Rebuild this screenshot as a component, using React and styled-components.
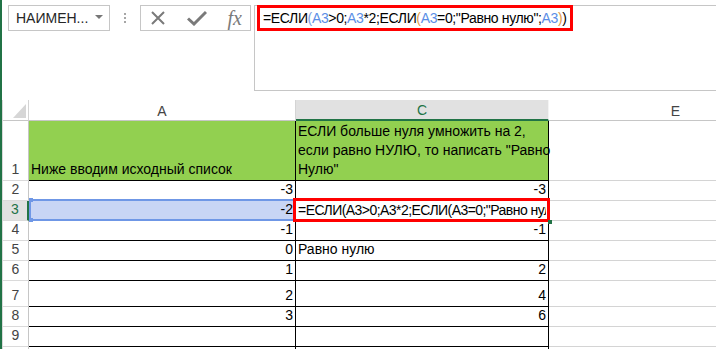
import React from 'react';
import styled, { createGlobalStyle } from 'styled-components';

const Global = createGlobalStyle`
  html, body { margin: 0; padding: 0; background: #fff; }
  body { font-family: "Liberation Sans", Arial, sans-serif; overflow: hidden; }
  * { box-sizing: border-box; }
`;

const Window = styled.div`
  width: 716px;
  height: 349px;
  overflow: hidden;
  border-left: 2px solid #217346;
  display: flex;
  flex-direction: column;
  background: #fff;
`;

const TopBar = styled.div`
  height: 100px;
  flex: none;
  display: flex;
  align-items: flex-start;
  padding: 5px 0 0 6px;
`;

const NameBox = styled.div`
  width: 102px;
  height: 26px;
  border: 1px solid #c6c6c6;
  display: flex;
  align-items: center;
  justify-content: space-between;
  padding: 0 6px 0 7px;
  font-size: 14px;
  color: #262626;
`;

const DropArrow = styled.span`
  width: 0;
  height: 0;
  border-left: 4px solid transparent;
  border-right: 4px solid transparent;
  border-top: 4px solid #777;
  margin-bottom: 2px;
`;

const Dots = styled.div`
  width: 30px;
  height: 26px;
  display: flex;
  flex-direction: column;
  align-items: center;
  justify-content: center;
  gap: 2px;
  & > i {
    width: 2px;
    height: 2px;
    background: #a6a6a6;
  }
`;

const FxBox = styled.div`
  width: 111px;
  height: 26px;
  border: 1px solid #c6c6c6;
  display: flex;
  align-items: center;
  justify-content: space-between;
  padding: 0 8px 0 9px;
`;

const FxLabel = styled.span`
  font-family: "Liberation Serif", "Times New Roman", serif;
  font-style: italic;
  font-size: 20px;
  color: #7a7a7a;
  line-height: 1;
  margin-top: -1px;
`;

const FormulaBar = styled.div`
  flex: 1;
  height: 86px;
  margin-left: 3px;
  border: 1px solid #c6c6c6;
  border-right: none;
`;

const FormulaText = styled.div`
  display: inline-flex;
  align-items: center;
  height: 26px;
  margin: -1px 0 0 2px;
  padding: 0 3px 0 3px;
  border: 3px solid #ff0000;
  font-size: 14px;
  letter-spacing: -0.36px;
  color: #000;
  white-space: nowrap;
`;

const Tok = styled.span`
  color: ${p => p.$c};
`;

const Sheet = styled.div`
  display: grid;
  grid-template-columns: 26px 267px 253px 254px;
  grid-template-rows: ${p => p.$rows};
  border-left: 1px solid #d9d9d9;
  font-size: 14px;
`;

const Corner = styled.div`
  background: #fff;
  border-right: 1px solid #d4d4d4;
  border-bottom: 1px solid #c6c6c6;
  display: flex;
  align-items: flex-end;
  justify-content: flex-end;
  padding: 0 2px 2px 0;
`;

const ColHead = styled.div`
  background: ${p => (p.$active ? '#e1e1e1' : '#fff')};
  color: ${p => (p.$active ? '#217346' : '#444')};
  border-right: 1px solid ${p => (p.$active ? '#f4f4f4' : '#d4d4d4')};
  border-bottom: ${p => (p.$active ? '2px solid #217346' : '1px solid #c6c6c6')};
  display: flex;
  align-items: center;
  justify-content: center;
  padding-top: 1px;
`;

const RowHead = styled.div`
  background: ${p => (p.$active ? '#e1e1e1' : '#fff')};
  color: ${p => (p.$active ? '#217346' : '#444')};
  border-right: ${p => (p.$active ? '2px solid #217346' : '1px solid #c6c6c6')};
  border-bottom: 1px solid #dadada;
  display: flex;
  align-items: flex-end;
  justify-content: center;
  padding-bottom: 1px;
  line-height: 19px;
`;

const Cell = styled.div`
  position: relative;
  background: ${p => p.$bg || '#fff'};
  border-right: ${p => (p.$grid ? 'none' : '1px solid #000')};
  border-bottom: 1px solid ${p => (p.$grid ? '#d4d4d4' : '#000')};
  display: flex;
  flex-direction: column;
  align-items: ${p => (p.$right ? 'flex-end' : 'flex-start')};
  justify-content: flex-end;
  padding: 0 2px 1px 2px;
  line-height: 19px;
  color: #000;
  white-space: nowrap;
`;

const Clip = styled.div`
  width: 100%;
  overflow: hidden;
  position: relative;
  z-index: 1;
  letter-spacing: -0.55px;
`;

const RedFrame = styled.div`
  position: absolute;
  top: -3px;
  left: -3px;
  right: -2px;
  bottom: -2px;
  border: 3px solid #ff0000;
  z-index: 3;
`;

const FillHandle = styled.div`
  position: absolute;
  right: -4px;
  bottom: -4px;
  width: 4px;
  height: 4px;
  background: #217346;
  z-index: 4;
`;

const RefFrame = styled.div`
  position: absolute;
  top: -2px;
  left: 0;
  right: -1px;
  bottom: -1px;
  border: 2px solid #6f97e6;
  z-index: 2;
`;

const Handle = styled.div`
  position: absolute;
  left: -2px;
  ${p => (p.$bottom ? 'bottom: -3px;' : 'top: -3px;')}
  width: 4px;
  height: 4px;
  background: #6f97e6;
`;

const Text = styled.span`
  position: relative;
  z-index: 1;
`;

const formula = [
  ['=ЕСЛИ', '#000'],
  ['(', '#7d9fe0'],
  ['A3', '#5b8ee6'],
  ['>0;', '#000'],
  ['A3', '#5b8ee6'],
  ['*2;ЕСЛИ', '#000'],
  ['(', '#e39a47'],
  ['A3', '#5b8ee6'],
  ['=0;"Равно нулю";', '#000'],
  ['A3', '#5b8ee6'],
  [')', '#e39a47'],
  [')', '#000'],
];

const rows = [
  { n: 1, h: 60, a: 'Ниже вводим исходный список', aText: true, c: ['ЕСЛИ больше нуля умножить на 2,', 'если равно НУЛЮ, то написать "Равно', 'Нулю"'], green: true },
  { n: 2, a: '-3', c: '-3' },
  { n: 3, a: '-2', formula: true, active: true },
  { n: 4, a: '-1', c: '-1' },
  { n: 5, a: '0', c: 'Равно нулю', cText: true },
  { n: 6, a: '1', c: '2' },
  { n: 7, h: 26, a: '2', c: '4' },
  { n: 8, a: '3', c: '6' },
  { n: 9 },
  { n: 10, hidden: true },
];

function XIcon() {
  return (
    <svg width="16" height="16" viewBox="0 0 16 16">
      <path d="M2 2 L14 14 M14 2 L2 14" stroke="#7a7a7a" strokeWidth="2" fill="none" />
    </svg>
  );
}

function CheckIcon() {
  return (
    <svg width="20" height="16" viewBox="0 0 20 16">
      <path d="M1 8.5 L7 14 L19 2" stroke="#7a7a7a" strokeWidth="3" fill="none" strokeLinejoin="miter" />
    </svg>
  );
}

function CornerMark() {
  return (
    <svg width="13" height="14" viewBox="0 0 13 14">
      <polygon points="0,14 13,14 13,0" fill="#d6d6d6" />
    </svg>
  );
}

export default function App() {
  const rowTemplate = ['21px', ...rows.map(r => `${r.h || 20}px`)].join(' ');
  return (
    <>
      <Global />
      <Window>
        <TopBar>
          <NameBox>
            <span>НАИМЕН...</span>
            <DropArrow />
          </NameBox>
          <Dots>
            <i />
            <i />
            <i />
          </Dots>
          <FxBox>
            <XIcon />
            <CheckIcon />
            <FxLabel>fx</FxLabel>
          </FxBox>
          <FormulaBar>
            <FormulaText>
              {formula.map(([t, c], i) => (
                <Tok key={i} $c={c}>{t}</Tok>
              ))}
            </FormulaText>
          </FormulaBar>
        </TopBar>
        <Sheet $rows={rowTemplate}>
          <Corner>
            <CornerMark />
          </Corner>
          <ColHead>A</ColHead>
          <ColHead $active>C</ColHead>
          <ColHead>E</ColHead>
          {rows.map(r => (
            <React.Fragment key={r.n}>
              <RowHead $active={r.active}>{r.hidden ? '' : r.n}</RowHead>
              <Cell $bg={r.green ? '#92d050' : r.active ? '#c8d5f5' : undefined} $right={!r.aText}>
                {r.active && (
                  <RefFrame>
                    <Handle />
                    <Handle $bottom />
                  </RefFrame>
                )}
                {r.a && <Text>{r.a}</Text>}
              </Cell>
              <Cell $bg={r.green ? '#92d050' : undefined} $right={!r.cText && !Array.isArray(r.c) && !r.formula}>
                {r.formula ? (
                  <>
                    <Clip>=ЕСЛИ(A3&gt;0;A3*2;ЕСЛИ(A3=0;"Равно нулю";A3))</Clip>
                    <RedFrame />
                    <FillHandle />
                  </>
                ) : Array.isArray(r.c) ? (
                  r.c.map((l, i) => <Text key={i}>{l}</Text>)
                ) : (
                  r.c && <Text>{r.c}</Text>
                )}
              </Cell>
              <Cell $grid />
            </React.Fragment>
          ))}
        </Sheet>
      </Window>
    </>
  );
}
